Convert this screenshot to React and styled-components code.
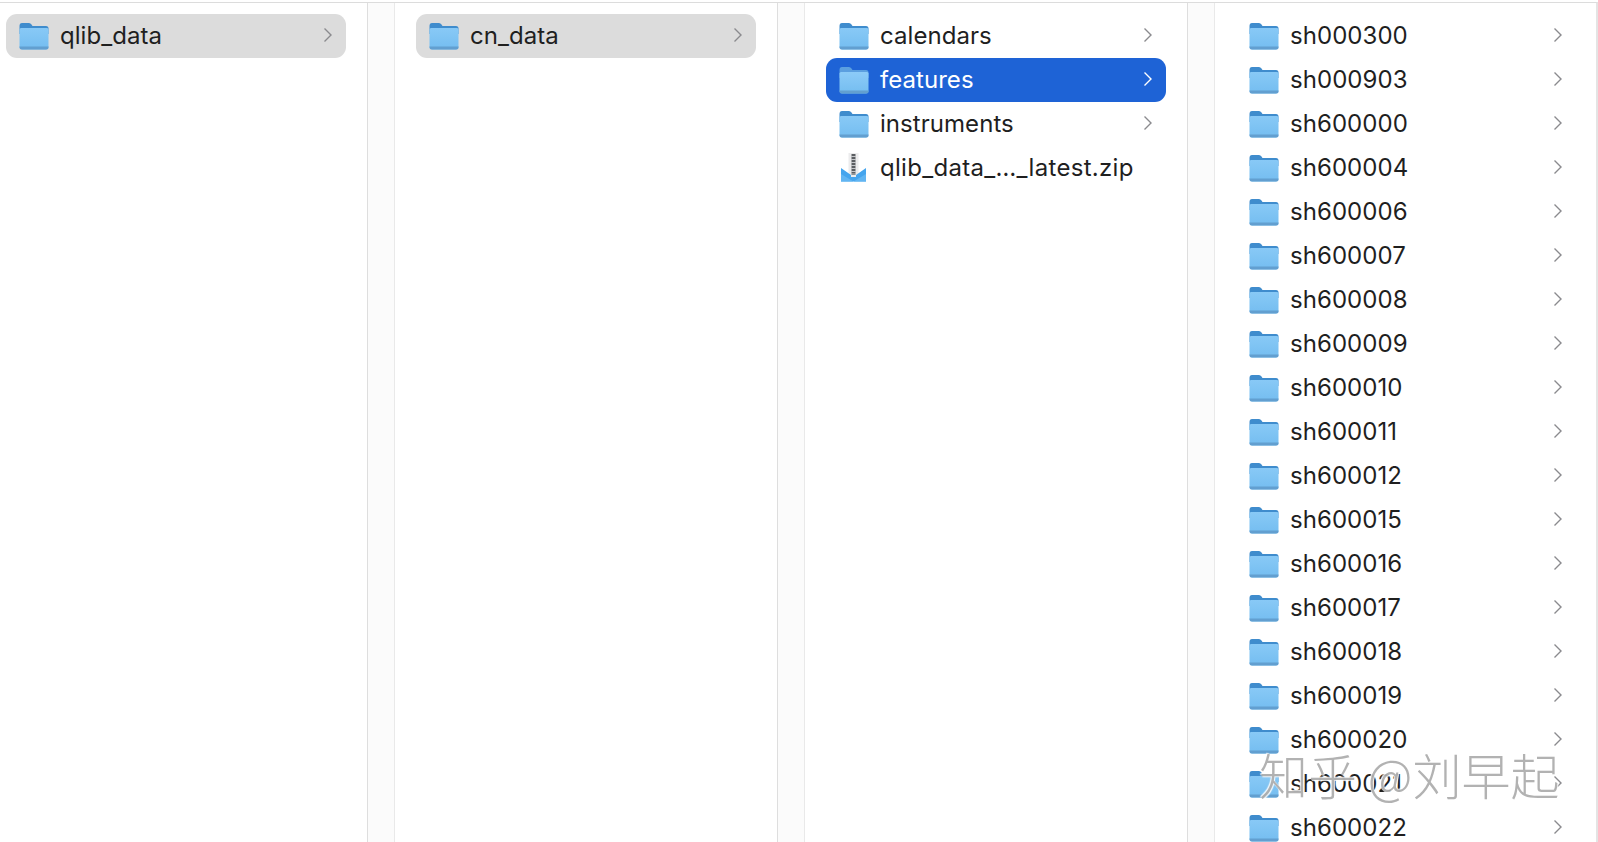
import styled, { createGlobalStyle } from 'styled-components'

const GlobalStyle = createGlobalStyle`
  html, body {
    margin: 0;
    height: 100%;
    overflow: hidden;
    background: #fff;
  }
`

const stocks = [
  'sh000300', 'sh000903', 'sh600000', 'sh600004', 'sh600006', 'sh600007',
  'sh600008', 'sh600009', 'sh600010', 'sh600011', 'sh600012', 'sh600015',
  'sh600016', 'sh600017', 'sh600018', 'sh600019', 'sh600020', 'sh600021',
  'sh600022',
]

const FolderIcon = ({ id, selected }) => (
  <svg width="30" height="28" viewBox="0 0 30 28">
    <defs>
      <linearGradient id={id} x1="0" y1="0" x2="0" y2="1">
        <stop offset="0" stopColor={selected ? '#8ccbf8' : '#88c9f6'} />
        <stop offset="1" stopColor="#74bdf0" />
      </linearGradient>
    </defs>
    <path d="M0.5 4 Q0.5 1 3 1 H10 Q11.5 1 12.5 2.5 L13.5 4 H27 Q29.5 4 29.5 6.5 V12 H0.5 Z" fill={selected ? '#5b9fe0' : '#3f8ccd'} />
    <path d="M0.5 7.5 Q0.5 6 2 6 H28 Q29.5 6 29.5 7.5 V25 Q29.5 27.5 27 27.5 H3 Q0.5 27.5 0.5 25 Z" fill={`url(#${id})`} />
    <path d="M0.5 24.5 H29.5 V25 Q29.5 27.5 27 27.5 H3 Q0.5 27.5 0.5 25 Z" fill="#629fd0" />
  </svg>
)

const ZipIcon = () => (
  <svg width="30" height="30" viewBox="0 0 30 30">
    <rect x="9.5" y="0" width="10" height="24" fill="#ececed" />
    <rect x="12.5" y="1" width="4" height="21" fill="#5b5e62" />
    <path d="M12 3.5 H17 M12 6.5 H17 M12 9.5 H17 M12 12.5 H17 M12 15.5 H17 M12 18.5 H17 M12 21 H17" stroke="#c5c7ca" strokeWidth="1" />
    <path d="M2 15 L12 22 V24 H17 V22 L27 15 V28.5 H2 Z" fill="#45a5ee" />
    <path d="M2 21 L14.5 28.5 H2 Z M27 21 L14.5 28.5 H27 Z" fill="#62b5f2" />
  </svg>
)

const Chevron = ({ selected }) => (
  <ChevronSvg viewBox="0 0 10 16" width="10" height="16">
    <path d="M1.5 1.5 L8 8 L1.5 14.5" fill="none" stroke={selected ? '#fff' : '#8a8a8e'} strokeWidth="1.4" />
  </ChevronSvg>
)

const Row = ({ name, state, chevron = true, icon, wide }) => (
  <RowBox $state={state}>
    <IconSlot>
      {icon || <FolderIcon id={`grad-${name}`} selected={state === 'selected'} />}
    </IconSlot>
    <Name $wide={wide}>{name}</Name>
    {chevron && <Chevron selected={state === 'selected'} />}
  </RowBox>
)

export default function App() {
  return (
    <>
      <GlobalStyle />
      <Window>
        <Column $first>
          <Row name="qlib_data" state="parent" />
        </Column>
        <Divider />
        <Column>
          <Row name="cn_data" state="parent" />
        </Column>
        <Divider />
        <Column>
          <Row name="calendars" />
          <Row name="features" state="selected" />
          <Row name="instruments" />
          <Row name="qlib_data_…_latest.zip" chevron={false} icon={<ZipIcon />} wide />
        </Column>
        <Divider />
        <Column $last>
          {stocks.map(name => (
            <Row key={name} name={name} />
          ))}
        </Column>
        <Watermark>知乎 @刘早起</Watermark>
      </Window>
    </>
  )
}

const Window = styled.div`
  position: relative;
  display: flex;
  box-sizing: border-box;
  width: 1598px;
  height: 840px;
  margin-top: 2px;
  border-top: 1px solid #dcdcdc;
  border-right: 2px solid #e4e4e4;
  overflow: hidden;
  background: #fff;
  font-family: Inter, 'Noto Sans CJK SC', sans-serif;
`

const Column = styled.div`
  box-sizing: border-box;
  flex: ${props => (props.$last ? '1' : 'none')};
  width: ${props => (props.$first ? '367px' : '382px')};
  padding: 11px 21px 0 ${props => (props.$first ? '6px' : '21px')};
`

const Divider = styled.div`
  flex: none;
  box-sizing: border-box;
  width: 28px;
  background: #fbfbfb;
  border-left: 1px solid #dedede;
  border-right: 1px solid #e9e9e9;
`

const RowBox = styled.div`
  display: flex;
  align-items: center;
  box-sizing: border-box;
  width: 340px;
  height: 44px;
  padding: 0 13px;
  border-radius: 11px;
  color: ${props => (props.$state === 'selected' ? '#fff' : '#1f1f1f')};
  background: ${props =>
    props.$state === 'selected'
      ? '#1e63d6'
      : props.$state === 'parent'
        ? '#dcdcdc'
        : 'transparent'};
`

const IconSlot = styled.span`
  display: flex;
  flex: none;
  width: 30px;
  margin-right: 11px;
`

const Name = styled.span`
  flex: 1;
  position: relative;
  top: -1px;
  font-size: 24px;
  letter-spacing: ${props => (props.$wide ? '0.3px' : '0.05px')};
  white-space: nowrap;
`

const ChevronSvg = styled.svg`
  flex: none;
  position: relative;
  top: -1px;
  margin-right: 0;
`

const Watermark = styled.div`
  position: absolute;
  left: 1259px;
  top: 735px;
  font-family: 'Noto Sans CJK SC', sans-serif;
  font-size: 49px;
  font-weight: 300;
  white-space: nowrap;
  color: rgba(165, 165, 165, 0.85);
  text-shadow: 1px 1px 1px rgba(255, 255, 255, 0.9), -1px -1px 1px rgba(255, 255, 255, 0.9);
`
